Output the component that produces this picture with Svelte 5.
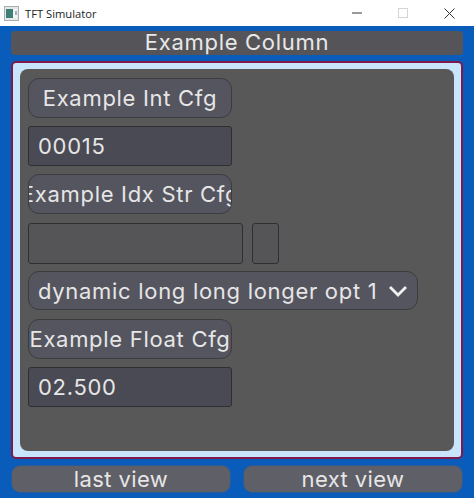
<script>
  const cols = ['last view', 'next view'];
</script>

<div class="window">
  <div class="titlebar">
    <svg class="appicon" width="15" height="15" viewBox="0 0 15 15">
      <rect x="0.5" y="0.5" width="14" height="14" fill="#e4e8e8" stroke="#a9b0b0"/>
      <rect x="2" y="3" width="7" height="9" fill="#3f7f78"/>
      <rect x="9" y="3" width="4" height="9" fill="#f4f6f6"/>
      <rect x="11" y="5" width="2" height="4" fill="#9fb4bb"/>
    </svg>
    <span class="title">TFT Simulator</span>
    <div class="controls">
      <svg width="10" height="10" viewBox="0 0 10 10"><path d="M0 5h10" stroke="#555" stroke-width="1.2"/></svg>
      <svg width="10" height="10" viewBox="0 0 10 10"><rect x="0.5" y="0.5" width="9" height="9" fill="none" stroke="#d4d4d4"/></svg>
      <svg width="11" height="11" viewBox="0 0 11 11"><path d="M.5.5l10 10M10.5.5l-10 10" stroke="#333" stroke-width="1"/></svg>
    </div>
  </div>
  <div class="screen">
    <div class="header">Example Column</div>
    <div class="panel">
      <div class="inner">
        <div class="btn w204">Example Int Cfg</div>
        <div class="field w204">00015</div>
        <div class="btn w204 clip"><span>Example Idx Str Cfg</span></div>
        <div class="row">
          <div class="field empty wide"></div>
          <div class="field empty small"></div>
        </div>
        <div class="select">
          <span>dynamic long long longer opt 1</span>
          <svg width="20" height="12" viewBox="0 0 20 12"><path d="M2 2l8 8 8-8" fill="none" stroke="#f0f0f0" stroke-width="2.8"/></svg>
        </div>
        <div class="btn w204 clip"><span>Example Float Cfg</span></div>
        <div class="field w204">02.500</div>
      </div>
    </div>
    <div class="footer">
      {#each cols as label}
        <div class="navbtn">{label}</div>
      {/each}
    </div>
  </div>
</div>

<style>
  :global(body) { margin: 0; }
  .window {
    width: 474px;
    height: 498px;
    display: flex;
    flex-direction: column;
    overflow: hidden;
    font-family: Inter, "Open Sans", sans-serif;
  }
  .titlebar {
    height: 26px;
    background: #fff;
    display: flex;
    align-items: center;
    padding-left: 4px;
    flex: none;
    box-sizing: border-box;
  }
  .appicon { margin-right: 6px; }
  .title {
    font-family: "Open Sans", "Liberation Sans", sans-serif;
    font-size: 11.2px;
    color: #222;
  }
  .controls {
    margin-left: auto;
    display: flex;
    align-items: center;
    gap: 36px;
    padding-right: 19px;
  }
  .screen {
    flex: 1;
    background: #0a5cba;
    padding: 5px 11px 6px;
    display: flex;
    flex-direction: column;
    gap: 6px;
    min-height: 0;
  }
  .header {
    height: 24px;
    flex: none;
    background: #555559;
    border-radius: 4px;
    color: #e8e8e8;
    font-size: 22px;
    letter-spacing: 0.7px;
    line-height: 23px;
    text-align: center;
  }
  .panel {
    height: 398px;
    flex: none;
    box-sizing: border-box;
    border: 2px solid #7c1a4e;
    border-radius: 5px;
    background: #c9e5fb;
    padding: 6px 7px;
  }
  .inner {
    height: 100%;
    box-sizing: border-box;
    background: #585858;
    border-radius: 8px;
    padding: 9px 8px;
    display: flex;
    flex-direction: column;
    align-items: flex-start;
    gap: 8px;
    color: #e6e6e6;
    font-size: 22px;
    letter-spacing: 0.7px;
  }
  .w204 { width: 204px; }
  .btn {
    height: 40px;
    box-sizing: border-box;
    background: #55555f;
    border: 1px solid #3c3c40;
    border-radius: 11px;
    display: flex;
    align-items: center;
    justify-content: center;
    white-space: nowrap;
    overflow: hidden;
  }
  .clip span { flex: none; }
  .field {
    height: 40px;
    box-sizing: border-box;
    background: #4a4a54;
    border: 1.5px solid #2f2f33;
    border-radius: 3px;
    display: flex;
    align-items: center;
    padding-left: 9px;
  }
  .row { display: flex; gap: 9px; margin-top: 1px; margin-bottom: -1px; }
  .empty { background: #555557; height: 41px; }
  .wide { width: 215px; }
  .small { width: 27px; }
  .select {
    width: 390px;
    height: 39px;
    box-sizing: border-box;
    background: #55555f;
    border: 1px solid #3c3c40;
    border-radius: 11px;
    display: flex;
    align-items: center;
    justify-content: space-between;
    padding: 0 9px;
    white-space: nowrap;
    margin-bottom: 1px;
  }
  .footer {
    display: flex;
    justify-content: space-between;
    flex: none;
  }
  .navbtn {
    width: 220px;
    height: 28px;
    box-sizing: border-box;
    background: #5f5f67;
    border: 1px solid #2a5a98;
    border-radius: 9px;
    color: #e6e6e6;
    font-size: 22px;
    letter-spacing: 0.4px;
    line-height: 26px;
    text-align: center;
  }
</style>
